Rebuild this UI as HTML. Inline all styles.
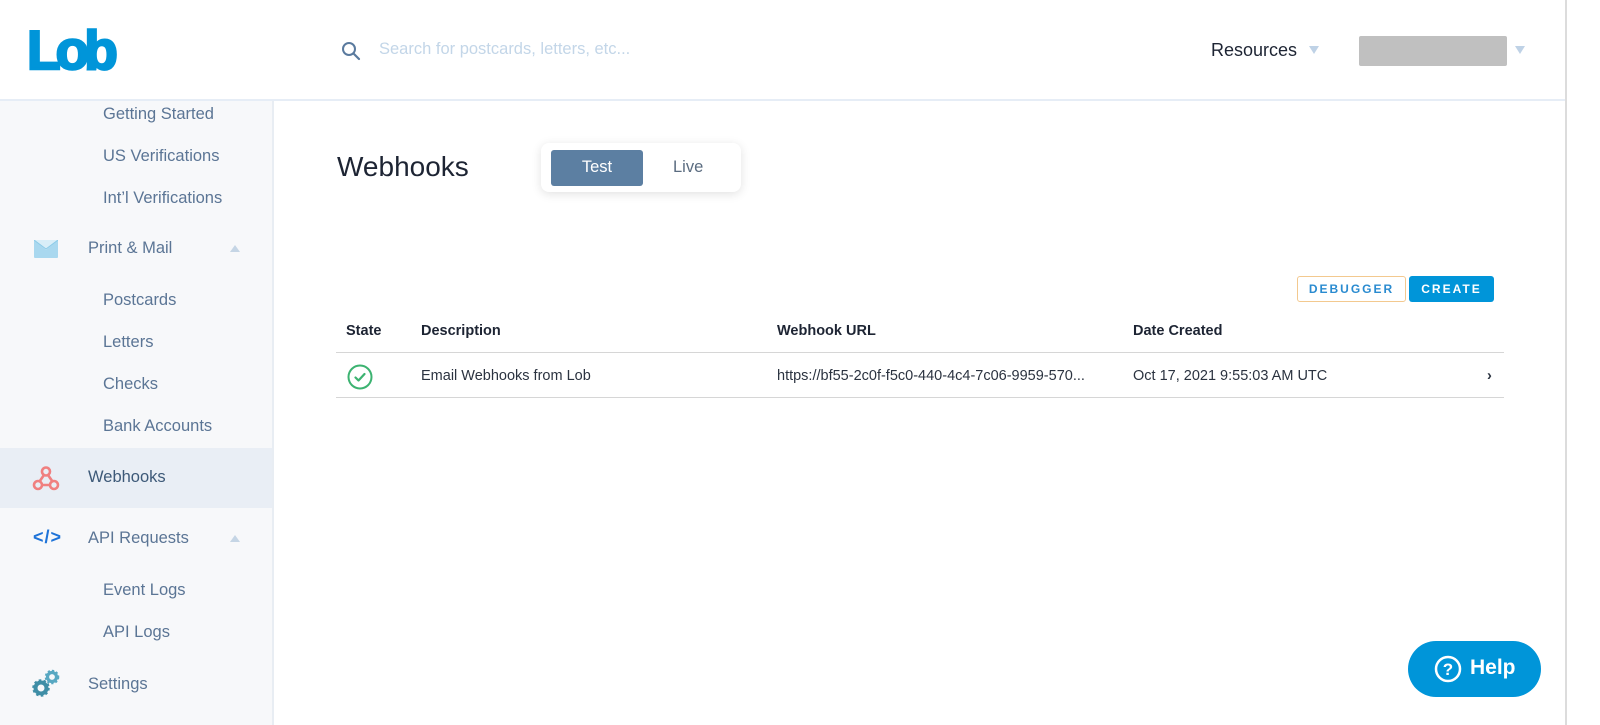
<!DOCTYPE html>
<html><head><meta charset="utf-8"><style>
*{margin:0;padding:0;box-sizing:border-box}
body{width:1600px;height:725px;overflow:hidden;background:#fff;font-family:"Liberation Sans",sans-serif;position:relative}
.a{position:absolute;white-space:nowrap}
.side{position:absolute;left:0;top:101px;width:274px;height:624px;background:#f7f8fa;border-right:2px solid #e8edf3}
.si{position:absolute;left:103px;font-size:16.5px;color:#5b7595}
.mi{position:absolute;left:88px;font-size:16.5px;color:#5b7595}
.th{position:absolute;top:323px;font-size:14.5px;font-weight:bold;color:#1d2433}
.td{position:absolute;top:368px;font-size:14.5px;color:#2b3340}
</style></head><body>
<div class="a" style="left:0;top:0;width:1565px;height:101px;border-bottom:2px solid #e6edf6;background:#fff"></div>
<div class="a" style="left:27px;top:18px;font-size:55px;font-weight:900;color:#0095d9;letter-spacing:-5px;line-height:64px;-webkit-text-stroke:2.5px #0095d9">Lob</div>
<svg class="a" style="left:341px;top:41px" width="20" height="20" viewBox="0 0 20 20"><circle cx="8" cy="8" r="6" fill="none" stroke="#5a7a9e" stroke-width="2"/><path d="M12.5 12.5L18 18" stroke="#5a7a9e" stroke-width="2.2" stroke-linecap="round"/></svg>
<div class="a" style="left:379px;top:40px;font-size:16.5px;color:#c3d6e8">Search for postcards, letters, etc...</div>
<div class="a" style="left:1211px;top:40px;font-size:18px;color:#1d2433">Resources</div>
<div class="a" style="left:1309px;top:46px;width:0;height:0;border-left:5px solid transparent;border-right:5px solid transparent;border-top:8px solid #bfd2e6"></div>
<div class="a" style="left:1359px;top:36px;width:148px;height:30px;background:#c0c0c0;border-radius:2px"></div>
<div class="a" style="left:1515px;top:46px;width:0;height:0;border-left:5px solid transparent;border-right:5px solid transparent;border-top:8px solid #bfd2e6"></div>
<div class="a" style="left:1565px;top:0;width:2px;height:725px;background:#dcdcdc"></div>
<div class="side">
<div class="si" style="top:4px">Getting Started</div>
<div class="si" style="top:46px">US Verifications</div>
<div class="si" style="top:88px">Int’l Verifications</div>
<svg class="a" style="left:34px;top:139px" width="24" height="18" viewBox="0 0 24 18"><rect width="24" height="18" rx="1" fill="#a9d8ef"/><path d="M0 0L12 10L24 0" fill="#d9eef8"/><path d="M0 0L12 9L24 0" fill="none" stroke="#8ccbe8" stroke-width="1"/></svg>
<div class="mi" style="top:138px">Print &amp; Mail</div>
<div class="a" style="left:230px;top:144px;border-left:5px solid transparent;border-right:5px solid transparent;border-bottom:7px solid #c5d5e5"></div>
<div class="si" style="top:190px">Postcards</div>
<div class="si" style="top:232px">Letters</div>
<div class="si" style="top:274px">Checks</div>
<div class="si" style="top:316px">Bank Accounts</div>
<div class="a" style="left:0;top:347px;width:272px;height:60px;background:#e9eef5"></div>
<svg class="a" style="left:32px;top:364px" width="28" height="28" viewBox="0 0 28 28" fill="none" stroke="#f08080" stroke-width="2.6"><circle cx="14" cy="6.5" r="4"/><circle cx="6" cy="20" r="4"/><circle cx="22" cy="20" r="4"/><path d="M12 10L7.5 16.5M10 20H18M16 10L20.5 16.5"/></svg>
<div class="mi" style="top:367px;color:#3d5978">Webhooks</div>
<div class="a" style="left:33px;top:426px;font-size:18px;font-weight:bold;color:#1e73d8;letter-spacing:1px">&lt;/&gt;</div>
<div class="mi" style="top:428px">API Requests</div>
<div class="a" style="left:230px;top:434px;border-left:5px solid transparent;border-right:5px solid transparent;border-bottom:7px solid #c5d5e5"></div>
<div class="si" style="top:480px">Event Logs</div>
<div class="si" style="top:522px">API Logs</div>
<svg class="a" style="left:32px;top:568px" width="28" height="28" viewBox="0 0 28 28"><circle cx="9" cy="19" r="5.5" fill="none" stroke="#3f8ea6" stroke-width="4"/><circle cx="9" cy="19" r="7.5" fill="none" stroke="#3f8ea6" stroke-width="2.5" stroke-dasharray="2.5 2.2"/><circle cx="20" cy="8" r="4.5" fill="none" stroke="#58a8c2" stroke-width="3.2"/><circle cx="20" cy="8" r="6.3" fill="none" stroke="#58a8c2" stroke-width="2" stroke-dasharray="2.2 2"/></svg>
<div class="mi" style="top:574px">Settings</div>
</div>
<div class="a" style="left:337px;top:151px;font-size:28px;color:#1d2433">Webhooks</div>
<div class="a" style="left:541px;top:143px;width:200px;height:49px;background:#fff;border-radius:8px;box-shadow:0 2px 10px rgba(0,0,0,0.12)"></div>
<div class="a" style="left:551px;top:150px;width:92px;height:36px;background:#5c7fa2;border-radius:3px;color:#fff;font-size:16.5px;text-align:center;line-height:35px">Test</div>
<div class="a" style="left:673px;top:158px;font-size:16.5px;color:#5b6c80">Live</div>
<div class="a" style="left:1297px;top:276px;width:109px;height:26px;border:1px solid #f3c98f;border-radius:3px;color:#2a8bd0;font-size:12px;font-weight:bold;letter-spacing:2px;text-align:center;line-height:24px">DEBUGGER</div>
<div class="a" style="left:1409px;top:276px;width:85px;height:26px;background:#0095d9;border-radius:3px;color:#fff;font-size:12px;font-weight:bold;letter-spacing:2px;text-align:center;line-height:26px">CREATE</div>
<div class="th" style="left:346px">State</div>
<div class="th" style="left:421px">Description</div>
<div class="th" style="left:777px">Webhook URL</div>
<div class="th" style="left:1133px">Date Created</div>
<div class="a" style="left:336px;top:352px;width:1168px;height:1px;background:#d6d6d6"></div>
<svg class="a" style="left:347px;top:364px" width="26" height="26" viewBox="0 0 26 26"><circle cx="13" cy="13" r="11.5" fill="none" stroke="#3cb371" stroke-width="2"/><path d="M8.5 13.5L11.5 16.5L17.5 10" fill="none" stroke="#3cb371" stroke-width="2.2" stroke-linecap="round" stroke-linejoin="round"/></svg>
<div class="td" style="left:421px">Email Webhooks from Lob</div>
<div class="td" style="left:777px">https://bf55-2c0f-f5c0-440-4c4-7c06-9959-570...</div>
<div class="td" style="left:1133px">Oct 17, 2021 9:55:03 AM UTC</div>
<div class="td" style="left:1487px;font-weight:bold">›</div>
<div class="a" style="left:336px;top:397px;width:1168px;height:1px;background:#d6d6d6"></div>
<div class="a" style="left:1408px;top:641px;width:133px;height:56px;background:#0095d9;border-radius:28px"></div>
<svg class="a" style="left:1434px;top:655px" width="28" height="28" viewBox="0 0 28 28"><circle cx="14" cy="14" r="12" fill="none" stroke="#fff" stroke-width="2.5"/><text x="14" y="20" text-anchor="middle" font-family="Liberation Sans" font-weight="bold" font-size="17" fill="#fff">?</text></svg>
<div class="a" style="left:1470px;top:656px;font-size:21px;font-weight:bold;color:#fff">Help</div>
</body></html>
